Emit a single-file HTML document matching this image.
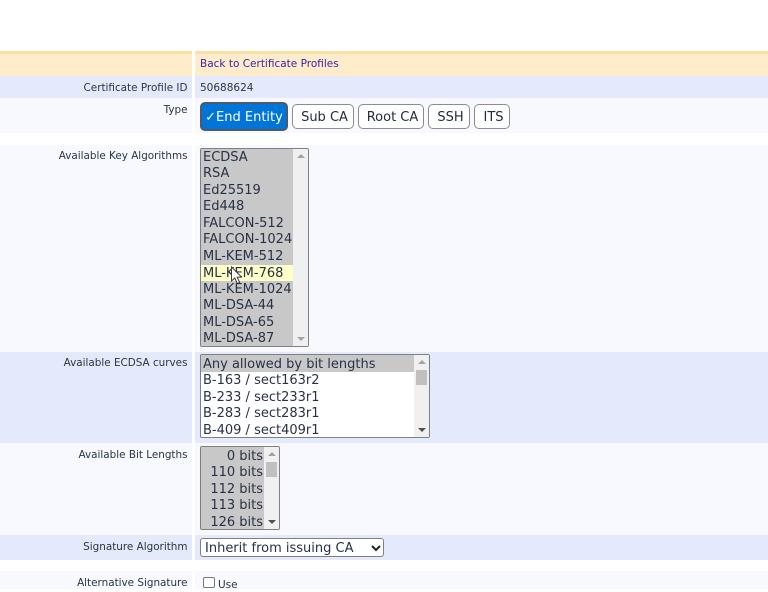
<!DOCTYPE html>
<html>
<head>
<meta charset="utf-8">
<style>
html,body{margin:0;padding:0;background:#fff;}
body{position:relative;width:768px;height:589px;overflow:hidden;font-family:"DejaVu Sans",sans-serif;color:#1f2d45;}
.b{position:absolute;}
.l{position:absolute;left:0;width:187.5px;text-align:right;font-size:10.4px;line-height:14px;white-space:nowrap;color:#2a3547;}
.t{position:absolute;font-size:10.5px;line-height:14px;white-space:nowrap;}
.btn{position:absolute;box-sizing:border-box;height:25px;top:104px;border:1px solid #8d8d8d;border-radius:5px;background:#fff;font-size:13px;line-height:25px;padding-left:3px;text-align:center;white-space:nowrap;color:#222c3c;}
.box{position:absolute;box-sizing:border-box;border:1px solid #808080;border-radius:2px;background:#fff;overflow:hidden;}
.o{position:absolute;left:0;height:16.5px;font-size:13px;line-height:16.5px;padding-left:2px;box-sizing:border-box;white-space:nowrap;color:#263247;}
.sb{position:absolute;top:0;bottom:0;right:0;background:#f0f0f0;}
.up,.dn{position:absolute;width:0;height:0;border-left:4px solid transparent;border-right:4px solid transparent;}
.up{border-bottom:4px solid #a3a3a3;}
.dn{border-top:4px solid #a3a3a3;}
</style>
</head>
<body>
<!-- row backgrounds -->
<div class="b" style="left:0;top:51px;width:192px;height:25px;background:#feeccb;border-top:3px solid #fddfa5;box-sizing:border-box;"></div>
<div class="b" style="left:195px;top:51px;width:573px;height:25px;background:#feeccb;border-top:3px solid #fddfa5;box-sizing:border-box;"></div>
<div class="b" style="left:0;top:76px;width:192px;height:22px;background:#e4eafc;"></div>
<div class="b" style="left:195px;top:76px;width:573px;height:22px;background:#e4eafc;"></div>
<div class="b" style="left:0;top:98px;width:192px;height:35px;background:#f7f9ff;"></div>
<div class="b" style="left:195px;top:98px;width:573px;height:35px;background:#f7f9ff;"></div>
<div class="b" style="left:0;top:145px;width:192px;height:207px;background:#f7f9ff;"></div>
<div class="b" style="left:195px;top:145px;width:573px;height:207px;background:#f7f9ff;"></div>
<div class="b" style="left:0;top:352px;width:192px;height:91px;background:#e4eafc;"></div>
<div class="b" style="left:195px;top:352px;width:573px;height:91px;background:#e4eafc;"></div>
<div class="b" style="left:0;top:443px;width:192px;height:92px;background:#f7f9ff;"></div>
<div class="b" style="left:195px;top:443px;width:573px;height:92px;background:#f7f9ff;"></div>
<div class="b" style="left:0;top:535px;width:192px;height:25px;background:#e4eafc;"></div>
<div class="b" style="left:195px;top:535px;width:573px;height:25px;background:#e4eafc;"></div>
<div class="b" style="left:0;top:571px;width:192px;height:18px;background:#f7f9ff;"></div>
<div class="b" style="left:195px;top:571px;width:573px;height:18px;background:#f7f9ff;"></div>

<!-- text rows -->
<div class="t" style="left:200px;top:57px;color:#3a1fa8;">Back to Certificate Profiles</div>
<div class="l" style="top:80.5px;">Certificate Profile ID</div>
<div class="t" style="left:200px;top:80.5px;color:#2a3547;">50688624</div>
<div class="l" style="top:103px;">Type</div>

<!-- buttons -->
<div class="btn" style="left:200px;top:102px;width:88px;height:29px;line-height:27px;padding-left:0;background:#0075d9;border:2px solid #4d5a6a;color:#fff;border-radius:5px;">✓End Entity</div>
<div class="btn" style="left:292px;top:104px;width:62px;">Sub CA</div>
<div class="btn" style="left:358px;top:104px;width:66px;">Root CA</div>
<div class="btn" style="left:428px;top:104px;width:42px;">SSH</div>
<div class="btn" style="left:474px;top:104px;width:36px;">ITS</div>

<!-- key algorithms -->
<div class="l" style="top:149px;">Available Key Algorithms</div>
<div class="box" style="left:200px;top:148px;width:109px;height:199px;">
  <div class="b" style="left:0;top:0;width:94px;height:197px;background:#c8c8c8;"></div>
  <div class="o" style="top:0.5px;">ECDSA</div>
  <div class="o" style="top:17px;">RSA</div>
  <div class="o" style="top:33.5px;">Ed25519</div>
  <div class="o" style="top:50px;">Ed448</div>
  <div class="o" style="top:66.5px;">FALCON-512</div>
  <div class="o" style="top:83px;">FALCON-1024</div>
  <div class="o" style="top:99.5px;">ML-KEM-512</div>
  <div class="o" style="top:115.5px;width:94px;background:#ffffc8;line-height:17.5px;">ML-KEM-768</div>
  <div class="o" style="top:132.5px;">ML-KEM-1024</div>
  <div class="o" style="top:149px;">ML-DSA-44</div>
  <div class="o" style="top:165.5px;">ML-DSA-65</div>
  <div class="o" style="top:182px;">ML-DSA-87</div>
  <div class="sb" style="width:15px;">
    <div class="up" style="left:3.5px;top:5px;"></div>
    <div class="dn" style="left:3.5px;bottom:5px;"></div>
  </div>
</div>
<!-- cursor -->
<svg class="b" style="left:230px;top:266px;" width="14" height="20" viewBox="0 0 14 20"><path d="M1.5 1 L1.5 15 L4.8 12 L7.2 17.5 L9.6 16.4 L7.2 11.2 L11.5 11 Z" fill="#fff" stroke="#3c3c3c" stroke-width="1"/></svg>

<!-- ECDSA curves -->
<div class="l" style="top:356px;">Available ECDSA curves</div>
<div class="box" style="left:200px;top:354px;width:230px;height:84px;">
  <div class="b" style="left:0;top:0;width:214px;height:17px;background:#c8c8c8;"></div>
  <div class="o" style="top:1.5px;">Any allowed by bit lengths</div>
  <div class="o" style="top:18px;">B-163 / sect163r2</div>
  <div class="o" style="top:34.5px;">B-233 / sect233r1</div>
  <div class="o" style="top:51px;">B-283 / sect283r1</div>
  <div class="o" style="top:67.5px;">B-409 / sect409r1</div>
  <div class="sb" style="width:15px;">
    <div class="up" style="left:3.5px;top:5px;"></div>
    <div class="b" style="left:2px;top:15px;width:11px;height:15px;background:#c0c0c0;"></div>
    <div class="dn" style="left:3.5px;bottom:5px;border-top-color:#505050;"></div>
  </div>
</div>

<!-- bit lengths -->
<div class="l" style="top:448px;">Available Bit Lengths</div>
<div class="box" style="left:200px;top:446px;width:80px;height:84px;">
  <div class="b" style="left:0;top:0;width:63px;height:82px;background:#c8c8c8;"></div>
  <div class="o" style="top:1.5px;width:62px;text-align:right;padding:0;">0 bits</div>
  <div class="o" style="top:18px;width:62px;text-align:right;padding:0;">110 bits</div>
  <div class="o" style="top:34.5px;width:62px;text-align:right;padding:0;">112 bits</div>
  <div class="o" style="top:51px;width:62px;text-align:right;padding:0;">113 bits</div>
  <div class="o" style="top:67.5px;width:62px;text-align:right;padding:0;">126 bits</div>
  <div class="sb" style="width:15px;">
    <div class="up" style="left:3.5px;top:5px;"></div>
    <div class="b" style="left:2px;top:15px;width:11px;height:15px;background:#c0c0c0;"></div>
    <div class="dn" style="left:3.5px;bottom:5px;border-top-color:#505050;"></div>
  </div>
</div>

<!-- signature algorithm -->
<div class="l" style="top:540px;">Signature Algorithm</div>
<div class="box" style="left:200px;top:538px;width:184px;height:19px;border-radius:3px;">
  <div class="o" style="top:1.5px;left:2px;height:16px;line-height:16px;">Inherit from issuing CA</div>
  <svg class="b" style="left:170px;top:6px;" width="10" height="7" viewBox="0 0 10 7"><path d="M1 1 L5 5 L9 1" fill="none" stroke="#222" stroke-width="2"/></svg>
</div>

<!-- alternative signature -->
<div class="l" style="top:576px;">Alternative Signature</div>
<div class="b" style="left:203px;top:577px;width:12px;height:11px;box-sizing:border-box;border:1px solid #767676;border-radius:2px;background:#fff;"></div>
<div class="t" style="left:218px;top:578px;color:#2a3547;">Use</div>
</body>
</html>
